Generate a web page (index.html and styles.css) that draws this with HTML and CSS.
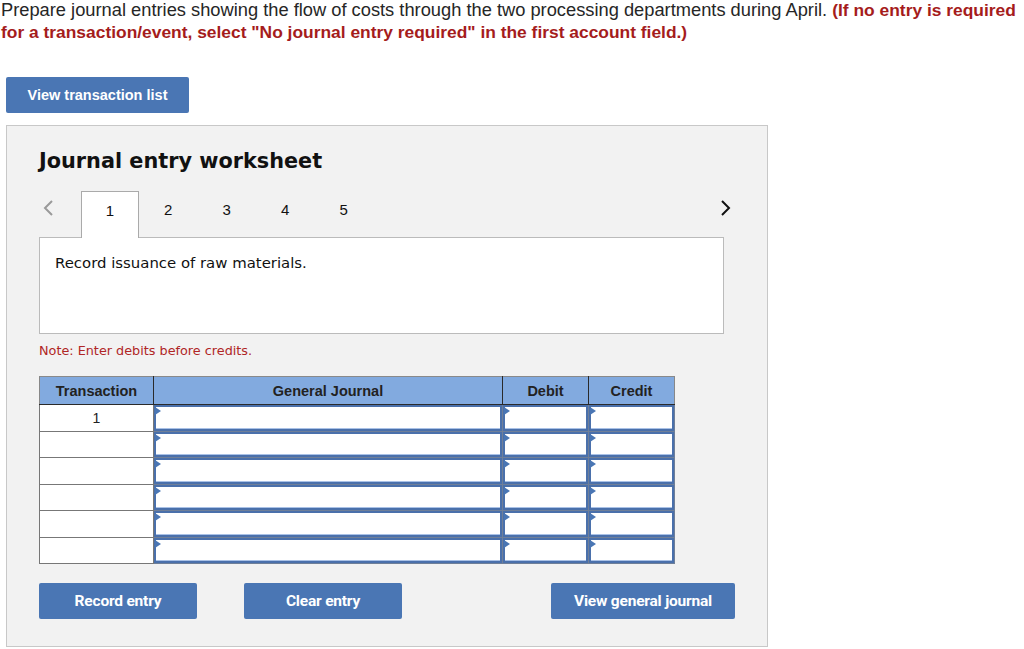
FILE: index.html
```html
<!DOCTYPE html>
<html>
<head>
<meta charset="utf-8">
<link rel="stylesheet" href="styles.css">
</head>
<body>
<p class="intro">Prepare journal entries showing the flow of costs through the two processing departments during April. <strong class="req">(If no entry is required for a transaction/event, select "No journal entry required" in the first account field.)</strong></p>

<button class="btn btn-top">View transaction list</button>

<section class="panel">
  <h2 class="title">Journal entry worksheet</h2>
  <div class="tabs">
    <span class="arrow arrow-left">
      <svg width="12" height="18" viewBox="0 0 12 18"><path d="M10 2 L3 9 L10 16" fill="none" stroke="#9a9a9a" stroke-width="2"/></svg>
    </span>
    <span class="tab active">1</span>
    <span class="tab">2</span>
    <span class="tab">3</span>
    <span class="tab">4</span>
    <span class="tab">5</span>
    <span class="arrow arrow-right">
      <svg width="12" height="18" viewBox="0 0 12 18"><path d="M2 2 L9 9 L2 16" fill="none" stroke="#111" stroke-width="2"/></svg>
    </span>
  </div>
  <div class="desc">Record issuance of raw materials.</div>
  <p class="note">Note: Enter debits before credits.</p>

  <table class="journal">
    <thead>
      <tr>
        <th class="c-trans">Transaction</th>
        <th class="c-gj">General Journal</th>
        <th class="c-num">Debit</th>
        <th class="c-num">Credit</th>
      </tr>
    </thead>
    <tbody>
      <tr><td class="trans">1</td><td class="inp"><div class="field"></div></td><td class="inp"><div class="field"></div></td><td class="inp"><div class="field"></div></td></tr>
      <tr><td class="trans"></td><td class="inp"><div class="field"></div></td><td class="inp"><div class="field"></div></td><td class="inp"><div class="field"></div></td></tr>
      <tr><td class="trans"></td><td class="inp"><div class="field"></div></td><td class="inp"><div class="field"></div></td><td class="inp"><div class="field"></div></td></tr>
      <tr><td class="trans"></td><td class="inp"><div class="field"></div></td><td class="inp"><div class="field"></div></td><td class="inp"><div class="field"></div></td></tr>
      <tr><td class="trans"></td><td class="inp"><div class="field"></div></td><td class="inp"><div class="field"></div></td><td class="inp"><div class="field"></div></td></tr>
      <tr><td class="trans"></td><td class="inp"><div class="field"></div></td><td class="inp"><div class="field"></div></td><td class="inp"><div class="field"></div></td></tr>
    </tbody>
  </table>

  <div class="actions">
    <button class="btn btn-act btn-record">Record entry</button>
    <button class="btn btn-act btn-clear">Clear entry</button>
    <button class="btn btn-act btn-view">View general journal</button>
  </div>
</section>
</body>
</html>
```

FILE: styles.css
```css
* { box-sizing: border-box; }
html, body { margin: 0; padding: 0; background: #fff; }
body { font-family: "Liberation Sans", Arial, sans-serif; color: #222; }

.intro {
  margin: -1px 0 0 0;
  padding: 0 0 0 1px;
  height: 43px;
  font-family: "Liberation Sans", Arial, sans-serif;
  font-size: 18.3px;
  line-height: 21px;
  color: #262626;
  width: 1024px;
}
.req { color: #a51c1c; font-weight: bold; font-size: 17.4px; line-height: 21px; }

.btn {
  display: block;
  border: none;
  border-radius: 2px;
  background: #4a76b4;
  color: #fff;
  font-family: Roboto, "Liberation Sans", sans-serif;
  font-weight: bold;
  font-size: 14px;
  cursor: pointer;
  padding: 0;
}
.btn-top {
  margin: 35px 0 0 6px;
  width: 183px;
  height: 36px;
  font-family: "Liberation Sans", Arial, sans-serif;
  font-size: 14.5px;
}

.panel {
  margin: 12px 0 0 6px;
  width: 762px;
  height: 522px;
  background: #f2f2f2;
  border: 1px solid #c8c8c8;
  padding: 0 32px;
}
.title {
  margin: 22px 0 0 0;
  font-family: "DejaVu Sans", Verdana, sans-serif;
  font-weight: bold;
  font-size: 20.8px;
  line-height: 26px;
  color: #111;
}

.tabs {
  display: flex;
  align-items: flex-end;
  margin-top: 17px;
  height: 46px;
}
.arrow { display: flex; align-items: center; height: 46px; padding-bottom: 12px; }
.arrow-left { width: 42px; padding-left: 3px; }
.arrow-right { margin-left: auto; padding-right: 3px; }
.tab {
  width: 58.5px;
  height: 46px;
  display: flex;
  align-items: center;
  justify-content: center;
  padding-bottom: 10px;
  font-family: "Liberation Sans", Arial, sans-serif;
  font-size: 15px;
  color: #111;
}
.tab.active {
  width: 58px;
  background: #fff;
  border: 1px solid #aaa;
  border-bottom: none;
  margin-bottom: -1px;
  height: 47px;
  position: relative;
  z-index: 1;
}

.desc {
  width: 685px;
  height: 97px;
  background: #fff;
  border: 1px solid #bbb;
  padding: 16px 15px;
  font-family: "DejaVu Sans", Verdana, sans-serif;
  font-size: 14.9px;
  color: #111;
}
.note {
  margin: 9px 0 0 0;
  font-family: "DejaVu Sans", Verdana, sans-serif;
  font-size: 12.8px;
  color: #b02626;
  line-height: 16px;
}

.journal {
  margin-top: 17px;
  border-collapse: collapse;
  width: 636px;
  table-layout: fixed;
}
.journal th {
  background: #82aadf;
  height: 28px;
  font-family: "Liberation Sans", Arial, sans-serif;
  font-weight: bold;
  font-size: 14.5px;
  color: #222;
  border: 1px solid #2a2a2a;
  border-top: 1px solid #8a8a8a;
  padding: 0;
}
.journal th:first-child { border-left: 1px solid #888; }
.journal th:last-child { border-right: 1px solid #888; }
.c-trans { width: 114px; }
.c-gj { width: 349px; }
.c-num { width: 86px; }

.journal td {
  height: 26.5px;
  padding: 0;
  border: 1px solid #777;
  background: #fff;
}
.journal td.trans {
  text-align: center;
  vertical-align: top;
  padding-top: 5px;
  font-size: 14px;
  color: #222;
}
.journal td.inp {
  border: 1px solid #6f7f98;
  position: relative;
}
.field {
  height: 100%;
  border: 2px solid #4a70ab;
  box-shadow: inset 0 -1px 0 #a9c1e6;
  position: relative;
}
.field::before {
  content: "";
  position: absolute;
  left: -1px;
  top: 0;
  border-left: 6px solid #4a76b4;
  border-top: 4px solid transparent;
  border-bottom: 4px solid transparent;
}

.actions {
  display: flex;
  margin-top: 19px;
}
.btn-act {
  height: 36px;
  font-size: 15.5px;
  letter-spacing: -0.2px;
}
.btn-record { width: 158px; }
.btn-clear { width: 158px; margin-left: 47px; }
.btn-view { width: 184px; margin-left: auto; }
```
